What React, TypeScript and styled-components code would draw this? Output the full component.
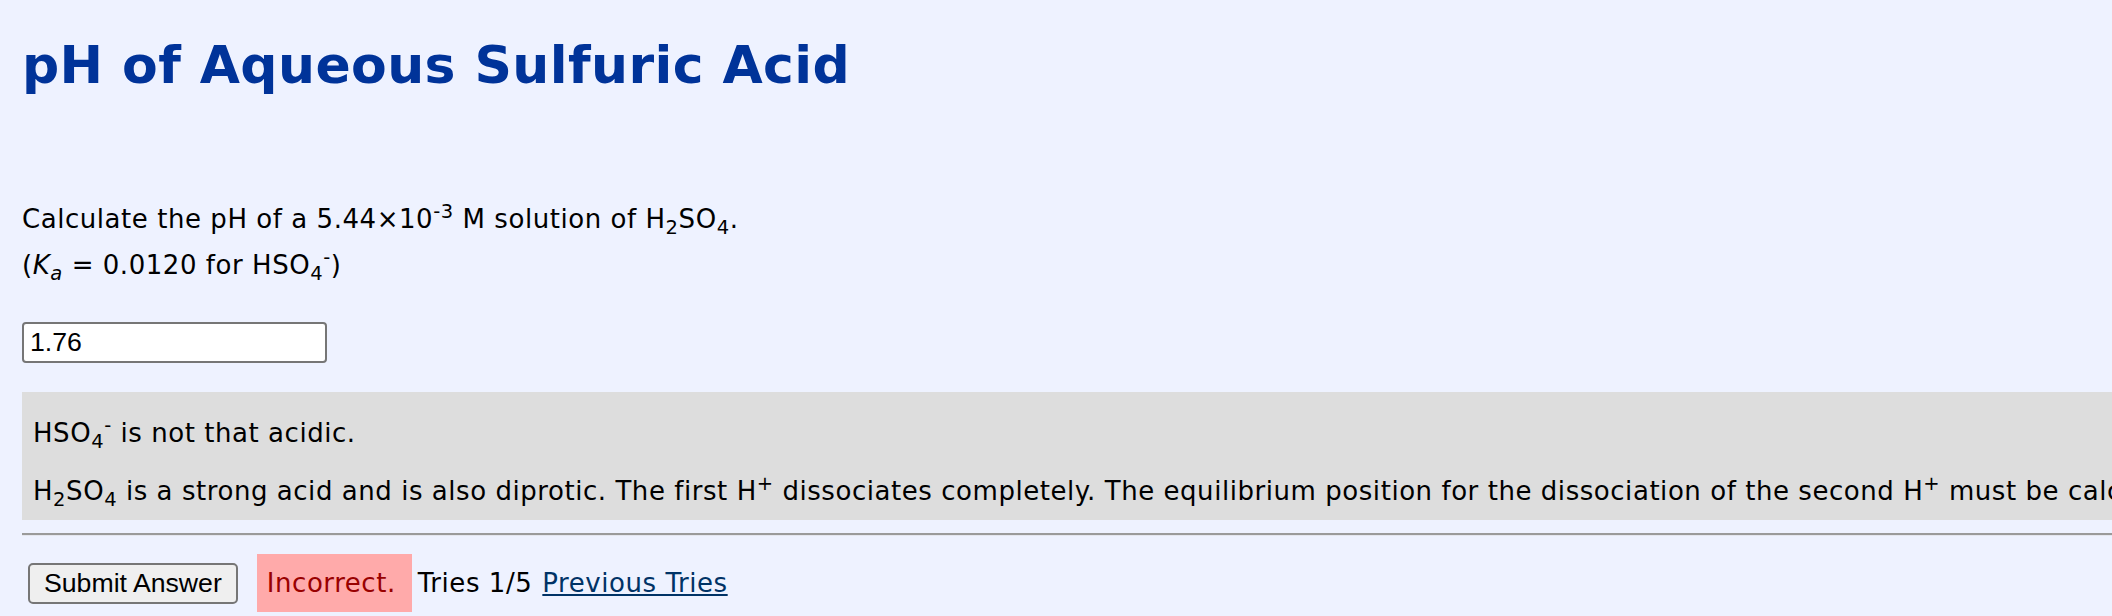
import React from "react";
import styled, { createGlobalStyle } from "styled-components";

const GlobalStyle = createGlobalStyle`
  html, body {
    margin: 0;
    padding: 0;
    background: #eef2ff;
    overflow: hidden;
  }
`;

const Page = styled.div`
  padding: 0 0 0 22px;
  font-family: "DejaVu Sans", Verdana, sans-serif;
  font-size: 26px;
  letter-spacing: 0.55px;
  color: #000;
  width: 2600px;
`;

const Title = styled.h1`
  margin: 35px 0 0 0;
  font-family: "DejaVu Sans", Verdana, sans-serif;
  font-size: 52px;
  font-weight: bold;
  letter-spacing: 0.4px;
  line-height: normal;
  color: #003399;
`;

const Para = styled.p<{ $top: number }>`
  margin: ${(p) => p.$top}px 0 0 0;
  line-height: 30px;
`;

const Sub = styled.sub`
  font-size: 0.75em;
  line-height: 0;
  vertical-align: -0.3em;
`;

const Sup = styled.sup`
  font-size: 0.75em;
  line-height: 0;
  vertical-align: 0.5em;
`;

const Italic = styled.i`
  font-style: italic;
`;

const AnswerInput = styled.input`
  display: block;
  box-sizing: border-box;
  margin: 42px 0 0 0;
  width: 305px;
  height: 41px;
  padding: 0 6px;
  border: 2px solid #767676;
  border-radius: 4px;
  background: #fff;
  font-family: "Liberation Sans", Arial, sans-serif;
  font-size: 26.67px;
  letter-spacing: 0;
  color: #000;
  outline: none;
`;

const Feedback = styled.div`
  margin-top: 29px;
  background: #dddddd;
  padding: 26px 12px 14px 11px;
  white-space: nowrap;
`;

const FeedbackLine = styled.p<{ $top: number }>`
  margin: ${(p) => p.$top}px 0 0 0;
  line-height: 30px;
`;

const Rule = styled.hr`
  margin: 13px 0 0 0;
  border: none;
  border-top: 2px solid #9a9a9a;
  border-bottom: 1px solid #e4e6ee;
  height: 0;
`;

const SubmitRow = styled.div`
  display: flex;
  align-items: center;
  margin-top: 18px;
  white-space: nowrap;
`;

const SubmitButton = styled.button`
  box-sizing: border-box;
  margin-left: 6px;
  height: 41px;
  padding: 0 14px;
  border: 2px solid #767676;
  border-radius: 5px;
  background: #efefef;
  font-family: "Liberation Sans", Arial, sans-serif;
  font-size: 26.67px;
  letter-spacing: 0;
  color: #000;
`;

const Verdict = styled.span`
  margin-left: 19px;
  background: #ffaaaa;
  color: #990000;
  padding: 14px 16px 14px 10px;
  line-height: 30px;
`;

const Tries = styled.span`
  margin-left: 6px;
  line-height: 30px;
`;

const TriesLink = styled.a`
  margin-left: 10px;
  color: #003366;
  text-decoration: underline;
  line-height: 30px;
`;

export default function App() {
  return (
    <>
      <GlobalStyle />
      <Page>
        <Title>pH of Aqueous Sulfuric Acid</Title>
        <Para $top={109}>
          Calculate the pH of a 5.44×10<Sup>-3</Sup> M solution of H<Sub>2</Sub>SO<Sub>4</Sub>.
        </Para>
        <Para $top={16}>
          (<Italic>K<Sub>a</Sub></Italic> = 0.0120 for HSO<Sub>4</Sub><Sup>-</Sup>)
        </Para>
        <AnswerInput type="text" defaultValue="1.76" />
        <Feedback>
          <FeedbackLine $top={0}>
            HSO<Sub>4</Sub><Sup>-</Sup> is not that acidic.
          </FeedbackLine>
          <FeedbackLine $top={28}>
            H<Sub>2</Sub>SO<Sub>4</Sub> is a strong acid and is also diprotic. The first H<Sup>+</Sup> dissociates completely. The equilibrium position for the dissociation of the second H<Sup>+</Sup> must be calculated.
          </FeedbackLine>
        </Feedback>
        <Rule />
        <SubmitRow>
          <SubmitButton type="button">Submit Answer</SubmitButton>
          <Verdict>Incorrect.</Verdict>
          <Tries>Tries 1/5</Tries>
          <TriesLink href="#">Previous Tries</TriesLink>
        </SubmitRow>
      </Page>
    </>
  );
}
